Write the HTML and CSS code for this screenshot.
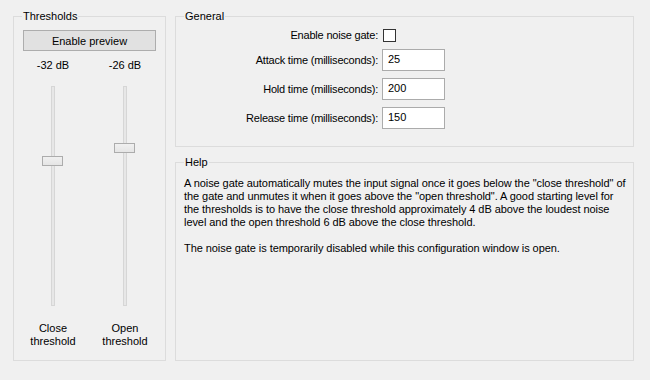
FILE: index.html
```html
<!DOCTYPE html>
<html>
<head>
<meta charset="utf-8">
<link rel="stylesheet" href="styles.css">
</head>
<body>
<div class="window">
  <section class="group thresholds">
    <div class="title">Thresholds</div>
    <button class="btn">Enable preview</button>
    <div class="sliders">
      <div class="slider-col">
        <div class="db">-32 dB</div>
        <div class="track"><div class="thumb thumb-close"></div></div>
        <div class="cap">Close<br>threshold</div>
      </div>
      <div class="slider-col">
        <div class="db">-26 dB</div>
        <div class="track"><div class="thumb thumb-open"></div></div>
        <div class="cap">Open<br>threshold</div>
      </div>
    </div>
  </section>
  <div class="right">
    <section class="group general">
      <div class="title">General</div>
      <div class="form">
        <label class="lbl">Enable noise gate:</label>
        <div class="ctl"><span class="check"></span></div>
        <label class="lbl">Attack time (milliseconds):</label>
        <div class="ctl"><span class="input">25</span></div>
        <label class="lbl">Hold time (milliseconds):</label>
        <div class="ctl"><span class="input">200</span></div>
        <label class="lbl">Release time (milliseconds):</label>
        <div class="ctl"><span class="input">150</span></div>
      </div>
    </section>
    <section class="group help">
      <div class="title">Help</div>
      <p class="helptext">A noise gate automatically mutes the input signal once it goes below the "close threshold" of<br>the gate and unmutes it when it goes above the "open threshold". A good starting level for<br>the thresholds is to have the close threshold approximately 4 dB above the loudest noise<br>level and the open threshold 6 dB above the close threshold.</p>
      <p class="helptext">The noise gate is temporarily disabled while this configuration window is open.</p>
    </section>
  </div>
</div>
</body>
</html>
```

FILE: styles.css
```css
html, body {
  margin: 0;
  padding: 0;
  background: #f0f0f0;
}
body {
  width: 650px;
  height: 380px;
  overflow: hidden;
  font-family: "Liberation Sans", Arial, sans-serif;
  font-size: 11px;
  line-height: 13px;
  color: #000;
}
.window {
  display: grid;
  grid-template-columns: 153px 459px;
  column-gap: 9px;
  padding: 16px 0 0 13px;
}
.group {
  border: 1px solid #dcdcdc;
  box-sizing: border-box;
}
.title {
  margin: -7px 0 0 8px;
  padding: 0 1px;
  background: #f0f0f0;
  width: fit-content;
  height: 13px;
}
.thresholds {
  height: 345px;
}
.btn {
  display: block;
  margin: 7px 9px 0 9px;
  width: 133px;
  height: 21px;
  box-sizing: border-box;
  border: 1px solid #adadad;
  background: #e1e1e1;
  font-family: inherit;
  font-size: 11px;
  color: #000;
  padding: 0;
}
.sliders {
  display: flex;
  gap: 12px;
  margin: 8px 0 0 9px;
}
.slider-col {
  width: 60px;
  display: flex;
  flex-direction: column;
  align-items: center;
}
.db {
  text-align: center;
}
.track {
  position: relative;
  margin-top: 14px;
  width: 4px;
  height: 220px;
  box-sizing: border-box;
  border: 1px solid #d6d6d6;
  background: #e7e7e7;
}
.thumb {
  position: absolute;
  left: -10px;
  width: 21px;
  height: 10px;
  box-sizing: border-box;
  border: 1px solid #acacac;
  background: linear-gradient(#f0f0f0, #e5e5e5);
}
.thumb-close { top: 69px; }
.thumb-open { top: 56px; }
.cap {
  margin-top: 16px;
  text-align: center;
}
.right {
  display: flex;
  flex-direction: column;
  gap: 15px;
}
.general {
  height: 131px;
}
.form {
  display: grid;
  width: 269px;
  grid-template-columns: 1fr 63px;
  column-gap: 4px;
  row-gap: 7px;
  grid-template-rows: 13px 22px 22px 22px;
  margin-top: 6px;
  align-items: center;
}
.lbl {
  text-align: right;
  letter-spacing: -0.2px;
}
.ctl {
  display: flex;
  align-items: center;
  height: 100%;
}
.check {
  display: block;
  width: 13px;
  height: 13px;
  box-sizing: border-box;
  border: 1px solid #333;
  background: #fff;
  margin-left: 1px;
}
.input {
  display: block;
  width: 63px;
  height: 22px;
  box-sizing: border-box;
  border: 1px solid #ababab;
  background: #fff;
  padding: 3px 0 0 5px;
}
.help {
  height: 199px;
}
.helptext {
  margin: 8px 0 0 8px;
  white-space: nowrap;
  letter-spacing: -0.065px;
}
.helptext + .helptext {
  margin-top: 13px;
}
```
